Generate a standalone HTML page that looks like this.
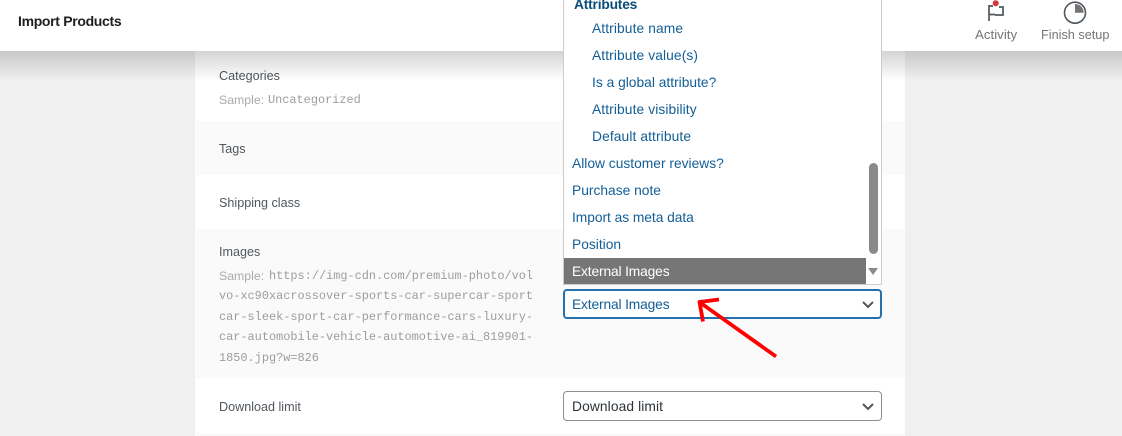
<!DOCTYPE html>
<html><head><meta charset="utf-8"><style>
html,body{margin:0;padding:0;width:1122px;height:436px;overflow:hidden;background:#f0f0f1;font-family:"Liberation Sans",sans-serif;}
div,span{position:absolute;white-space:nowrap;}
.t{font-size:12.6px;line-height:18px;color:#50575e;}
.s{font-size:12.300px;line-height:18px;color:#a7aaad;}
.m{font-family:"Liberation Mono",monospace;font-size:11.900px;line-height:18px;color:#9a9da0;}
.o{font-size:13.800px;line-height:18px;color:#135e96;height:18px;}
.sel{box-sizing:border-box;left:563px;width:319px;height:30px;background:#fff;border-radius:4px;}
</style></head><body>
<div style="left:195px;top:0;width:710px;height:436px;background:#fff"></div>
<div style="left:195px;top:121px;width:710px;height:54px;background:#fafafa"></div>
<div style="left:195px;top:229px;width:710px;height:149px;background:#fafafa"></div>
<div style="left:195px;top:433px;width:710px;height:3px;background:#fafafa"></div>

<div class="t" style="left:219px;top:67px">Categories</div>
<div class="s" style="left:219px;top:91px">Sample:</div>
<div class="m" style="left:268px;top:91px">Uncategorized</div>
<div class="t" style="left:219px;top:140px">Tags</div>
<div class="t" style="left:219px;top:194px">Shipping class</div>
<div class="t" style="left:219px;top:243px">Images</div>
<div class="s" style="left:219px;top:267px">Sample:</div>
<div class="m" style="left:269px;top:267px">https://img-cdn.com/premium-photo/vol</div>
<div class="m" style="left:219px;top:287px">vo-xc90xacrossover-sports-car-supercar-sport</div>
<div class="m" style="left:219px;top:308px">car-sleek-sport-car-performance-cars-luxury-</div>
<div class="m" style="left:219px;top:328px">car-automobile-vehicle-automotive-ai_819901-</div>
<div class="m" style="left:219px;top:349px">1850.jpg?w=826</div>
<div class="t" style="left:219px;top:398px">Download limit</div>

<!-- header -->
<div style="left:0;top:51px;width:1122px;height:30px;background:linear-gradient(rgba(0,0,0,.17),rgba(0,0,0,0))"></div>
<div style="left:0;top:0;width:1122px;height:51px;background:#fff"></div>
<div style="left:18px;top:12px;font-size:14px;line-height:18px;font-weight:bold;color:#1e1e1e;letter-spacing:-.32px">Import Products</div>
<svg style="position:absolute;left:975px;top:0" width="40" height="24" viewBox="0 0 40 24" fill="none">
<path d="M14 21V5M14 6h4M14 14.500h6M24 7h4v8h-8" stroke="#50575e" stroke-width="1.700"/>
<circle cx="20.700" cy="3.300" r="3" fill="#d63638"/>
</svg>
<div style="left:975px;top:26px;font-size:13.300px;line-height:18px;color:#757575">Activity</div>
<svg style="position:absolute;left:1063px;top:1px" width="24" height="24" viewBox="0 0 24 24" fill="none">
<circle cx="12" cy="11.700" r="10.500" stroke="#50575e" stroke-width="1.600"/>
<path d="M12 3a8.700 8.700 0 0 1 8.700 8.700h-8.700z" fill="#757575"/>
</svg>
<div style="left:1041px;top:26px;font-size:12.700px;line-height:18px;color:#757575">Finish setup</div>

<!-- dropdown -->
<div style="left:563px;top:0;width:319px;height:285px;box-sizing:border-box;background:#fff;border:1px solid #ccc;border-top:0;overflow:hidden"></div>
<div style="left:564px;top:258px;width:302px;height:26px;background:#767676"></div>
<div class="o" style="left:574px;top:-4px;font-weight:bold;color:#0a4b78;letter-spacing:-.2px">Attributes</div>
<div class="o" style="left:592px;top:20px;letter-spacing:.1px">Attribute name</div>
<div class="o" style="left:592px;top:47px;letter-spacing:.1px">Attribute value(s)</div>
<div class="o" style="left:592px;top:74px">Is a global attribute?</div>
<div class="o" style="left:592px;top:101px;letter-spacing:.1px">Attribute visibility</div>
<div class="o" style="left:592px;top:128px;letter-spacing:.1px">Default attribute</div>
<div class="o" style="left:572px;top:155px">Allow customer reviews?</div>
<div class="o" style="left:572px;top:182px">Purchase note</div>
<div class="o" style="left:572px;top:209px;letter-spacing:-.05px">Import as meta data</div>
<div class="o" style="left:572px;top:236px">Position</div>
<div class="o" style="left:572px;top:263px;color:#fff;letter-spacing:-.15px">External Images</div>
<div style="left:869px;top:163px;width:9px;height:91px;background:#8a8a8a;border-radius:5px"></div>
<svg style="position:absolute;left:868px;top:268px" width="10" height="8"><path d="M0 0h10L5 7z" fill="#8a8a8a"/></svg>

<!-- selects -->
<div class="sel" style="top:289px;border:2px solid #2271b1"></div>
<div class="o" style="left:572px;top:296px;letter-spacing:-.15px">External Images</div>
<svg style="position:absolute;left:861px;top:300px" width="14" height="10" fill="none"><path d="M2 2l5 5 5-5" stroke="#50575e" stroke-width="2"/></svg>
<div class="sel" style="top:391px;border:1px solid #8c8f94"></div>
<div class="o" style="left:572px;top:398px;color:#2c3338;letter-spacing:.1px">Download limit</div>
<svg style="position:absolute;left:861px;top:402px" width="14" height="10" fill="none"><path d="M2 2l5 5 5-5" stroke="#50575e" stroke-width="2"/></svg>

<!-- arrow -->
<svg style="position:absolute;left:690px;top:290px" width="95" height="75" fill="none">
<path d="M86 66.500L10 12.500M29 9.500L9.500 12L13 31.500" stroke="#f00" stroke-width="3.800" stroke-linejoin="round"/>
</svg>
</body></html>
